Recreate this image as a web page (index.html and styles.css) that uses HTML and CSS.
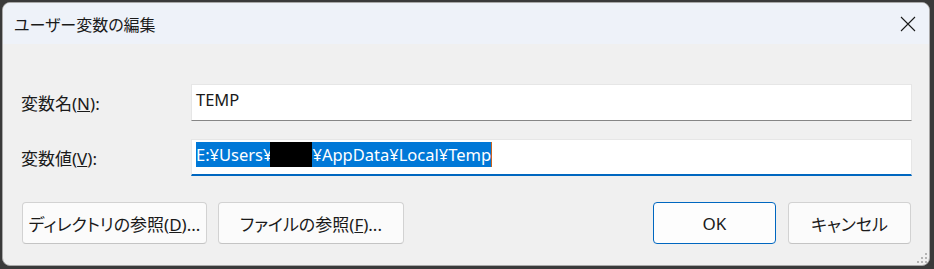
FILE: index.html
```html
<!DOCTYPE html>
<html lang="ja">
<head>
    <meta charset="UTF-8">
    <meta name="viewport" content="width=device-width, initial-scale=1.0">
    <title>ユーザー変数の編集</title>
    <link rel="stylesheet" href="styles.css">
</head>
<body>
    <div class="window">
        <div class="titlebar">
            <span class="title">ユーザー変数の編集</span>
            <svg class="close" width="16" height="16" viewBox="0 0 16 16">
                <path d="M1 1 L15 15 M15 1 L1 15" stroke="#1a1a1a" stroke-width="1.1" fill="none"/>
            </svg>
        </div>

        <div class="content">
            <div class="field">
                <label class="label">変数名(<u>N</u>):</label>
                <div class="input">TEMP</div>
            </div>

            <div class="field">
                <label class="label">変数値(<u>V</u>):</label>
                <div class="input focused"><span class="selected">E:¥Users¥<span class="redacted"></span>¥AppData¥Local¥Temp</span><span class="caret"></span></div>
            </div>

            <div class="buttons">
                <div class="group">
                    <button class="btn wide">ディレクトリの参照(<u>D</u>)...</button>
                    <button class="btn wide">ファイルの参照(<u>F</u>)...</button>
                </div>
                <div class="group">
                    <button class="btn primary">OK</button>
                    <button class="btn">キャンセル</button>
                </div>
            </div>
        </div>

        <svg class="grip" width="12" height="12" viewBox="0 0 12 12">
            <rect x="9" y="1" width="2" height="2" fill="#b4b4b4"/>
            <rect x="5" y="5" width="2" height="2" fill="#b4b4b4"/>
            <rect x="9" y="5" width="2" height="2" fill="#b4b4b4"/>
            <rect x="1" y="9" width="2" height="2" fill="#b4b4b4"/>
            <rect x="5" y="9" width="2" height="2" fill="#b4b4b4"/>
            <rect x="9" y="9" width="2" height="2" fill="#b4b4b4"/>
        </svg>
    </div>
</body>
</html>
```

FILE: styles.css
```css
* {
    margin: 0;
    padding: 0;
    box-sizing: border-box;
    font-family: 'Noto Sans', 'Noto Sans CJK JP', sans-serif;
    font-feature-settings: "palt";
}

body {
    background-color: #3a3a3a;
    width: 934px;
    height: 269px;
    padding: 2px 0 0 2px;
    overflow: hidden;
}

.window {
    position: relative;
    width: 928px;
    height: 264px;
    background: #f0f0f0;
    border: 1px solid #a8a8a8;
    border-radius: 8px;
    overflow: hidden;
    color: #1a1a1a;
}

.titlebar {
    height: 41px;
    background: #eef2f9;
    display: flex;
    align-items: center;
    justify-content: space-between;
    padding: 0 13px 0 11px;
}

.title {
    font-size: 16px;
}

.close {
    margin-top: 1px;
}

.content {
    padding: 40px 17px 0 17px;
}

.field {
    display: flex;
    align-items: center;
    margin-bottom: 18px;
}

.label {
    width: 171px;
    padding-left: 1px;
    font-size: 17px;
}

.input {
    flex: 1;
    height: 37px;
    background: #ffffff;
    border: 1px solid #e6e6e6;
    border-bottom: 1px solid #868686;
    padding: 2px 4px 0;
    font-size: 16.5px;
    line-height: 25px;
    white-space: nowrap;
}

.input.focused {
    border-bottom: 2px solid #0067c0;
}

.selected {
    display: inline-block;
    background: #0078d7;
    color: #ffffff;
    vertical-align: top;
}

.redacted {
    display: inline-block;
    width: 42px;
    height: 25px;
    margin-left: -2px;
    background: #000000;
    vertical-align: top;
}

.caret {
    display: inline-block;
    width: 1px;
    height: 25px;
    background: #c86420;
    vertical-align: top;
}

.buttons {
    display: flex;
    justify-content: space-between;
    padding: 8px 1px 0 2px;
}

.group {
    display: flex;
    gap: 11px;
}

.group + .group {
    gap: 12px;
}

.btn {
    width: 123px;
    height: 42px;
    background: #fbfbfb;
    border: 1px solid #d2d2d2;
    border-bottom-color: #c4c4c4;
    border-radius: 4px;
    font-size: 17px;
    color: #1a1a1a;
}

.btn.wide {
    width: 185px;
}

.btn.wide + .btn.wide {
    width: 186px;
}

.btn.primary {
    background: #fdfdfd;
    border: 1px solid #0067c0;
}

.grip {
    position: absolute;
    right: 1px;
    bottom: 1px;
}
```
